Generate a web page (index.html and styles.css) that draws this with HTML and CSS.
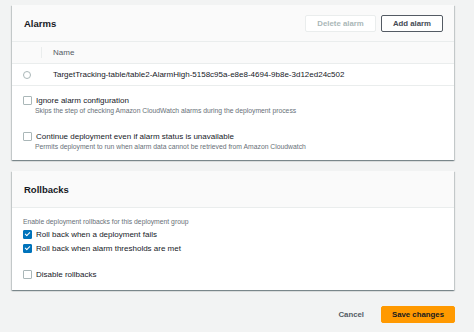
FILE: index.html
```html
<!DOCTYPE html>
<html>
<head>
    <title>Edit deployment group</title>
    <link rel="stylesheet" href="styles.css">
</head>
<body>
    <div class="card">
        <div class="card-header">
            <h2>Alarms</h2>
            <div class="actions">
                <button class="btn" disabled>Delete alarm</button>
                <button class="btn">Add alarm</button>
            </div>
        </div>
        <div class="table-head">
            <div class="select-col"></div>
            <div class="name-col">Name</div>
        </div>
        <div class="table-row">
            <div class="select-col"><span class="radio"></span></div>
            <div class="name-col">TargetTracking-table/table2-AlarmHigh-5158c95a-e8e8-4694-9b8e-3d12ed24c502</div>
        </div>
        <div class="options">
            <div class="option">
                <label class="check"><span class="box"></span>Ignore alarm configuration</label>
                <div class="desc">Skips the step of checking Amazon CloudWatch alarms during the deployment process</div>
            </div>
            <div class="option">
                <label class="check"><span class="box"></span>Continue deployment even if alarm status is unavailable</label>
                <div class="desc">Permits deployment to run when alarm data cannot be retrieved from Amazon Cloudwatch</div>
            </div>
        </div>
    </div>

    <div class="card">
        <div class="card-header">
            <h2>Rollbacks</h2>
        </div>
        <div class="card-body">
            <div class="intro">Enable deployment rollbacks for this deployment group</div>
            <label class="check first"><span class="box checked"></span>Roll back when a deployment fails</label>
            <label class="check"><span class="box checked"></span>Roll back when alarm thresholds are met</label>
            <label class="check spaced"><span class="box"></span>Disable rollbacks</label>
        </div>
    </div>

    <div class="footer">
        <button class="btn link">Cancel</button>
        <button class="btn primary">Save changes</button>
    </div>
</body>
</html>
```

FILE: styles.css
```css
body {
    margin: 0;
    padding: 5px 20px 0 12px;
    background: #f2f3f3;
    font-family: "Liberation Sans", Arial, sans-serif;
    font-size: 8px;
    color: #16191f;
}
.card {
    width: 442px;
    background: #fff;
    box-shadow: 0 1px 1px 0 rgba(0,28,36,0.3), 1px 1px 1px 0 rgba(0,28,36,0.15), -1px 1px 1px 0 rgba(0,28,36,0.15);
    margin-bottom: 11px;
}
.card-header {
    height: 36px;
    background: #fafafa;
    border-bottom: 1px solid #eaeded;
    display: flex;
    align-items: center;
    justify-content: space-between;
    padding: 0 11px 0 12px;
}
h2 { margin: 0; font-size: 9.5px; font-weight: bold; }
.actions { display: flex; gap: 5px; }
.btn {
    font-family: inherit;
    font-size: 7.8px;
    font-weight: bold;
    height: 17px;
    padding: 0 10px;
    background: #fff;
    color: #444b54;
    border: 1px solid #545b64;
    border-radius: 2px;
}
.btn:disabled { color: #aab7b8; border-color: #eaeded; }
.card-header .btn:disabled { width: 71px; }
.card-header .btn { width: 62px; padding: 0; }

.table-head, .table-row {
    display: flex;
    align-items: center;
    height: 21px;
    border-bottom: 1px solid #eaeded;
}
.table-head { background: #fafafa; color: #545b64; }
.select-col {
    width: 29px;
    display: flex;
    justify-content: center;
}
.table-head .select-col { height: 11px; border-right: 1px solid #eaeded; }
.table-head .name-col { padding-left: 11px; }
.table-row .name-col { padding-left: 12px; }
.radio {
    width: 6px;
    height: 6px;
    border: 1px solid #aab7b8;
    border-radius: 50%;
}

.options { padding: 9px 11px 9px; }
.option + .option { margin-top: 16px; }
.check {
    display: flex;
    align-items: center;
    line-height: 11px;
}
.box {
    width: 7px;
    height: 7px;
    border: 1px solid #aab7b8;
    border-radius: 1px;
    margin-right: 4px;
    position: relative;
}
.box.checked { background: #0073bb; border-color: #0073bb; }
.box.checked::after {
    content: "";
    position: absolute;
    left: 2px;
    top: 0;
    width: 2px;
    height: 4px;
    border: solid #fff;
    border-width: 0 1.3px 1.3px 0;
    transform: rotate(45deg);
}
.desc {
    padding-left: 12px;
    font-size: 6.8px;
    line-height: 9px;
    color: #687078;
}

.card-body { padding: 9px 12px 10px 11px; }
.intro { font-size: 6.8px; line-height: 10px; color: #687078; }
.card-body .check.first { margin-top: 2px; }
.card-body .check + .check { margin-top: 3px; }
.card-body .check.spaced { margin-top: 15px; }

.footer {
    width: 443px;
    display: flex;
    justify-content: flex-end;
    align-items: center;
    margin-top: 16px;
}
.btn.link { border: none; background: none; color: #545b64; padding: 0 17px 0 0; }
.btn.primary {
    width: 74px;
    padding: 0;
    background: #ff9900;
    border-color: #ff9900;
    color: #16191f;
}
```
